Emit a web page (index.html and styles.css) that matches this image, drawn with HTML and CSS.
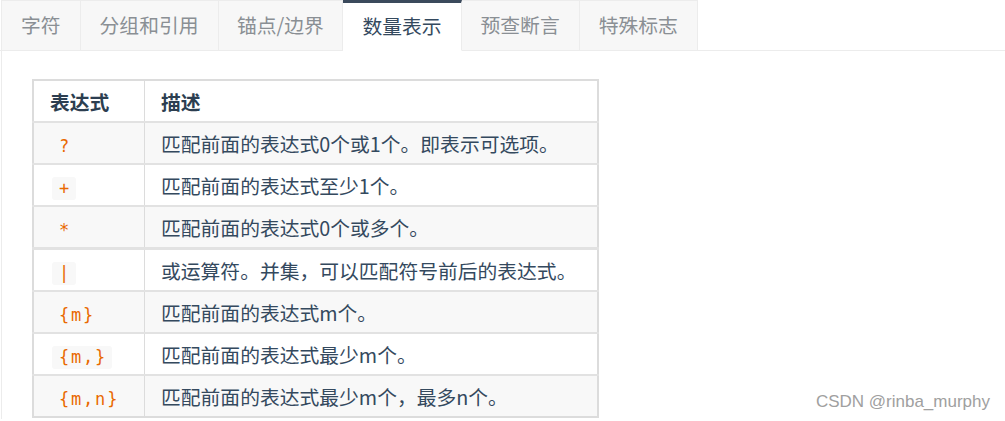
FILE: index.html
```html
<!DOCTYPE html>
<html lang="zh-CN">
<head>
  <meta charset="UTF-8">
  <meta name="viewport" content="width=device-width, initial-scale=1.0">
  <title>正则表达式 - 数量表示</title>
  <link rel="stylesheet" href="styles.css">
</head>
<body>

  <div class="tabs">
    <div class="tab">字符</div>
    <div class="tab">分组和引用</div>
    <div class="tab narrow">锚点/边界</div>
    <div class="tab active">数量表示</div>
    <div class="tab">预查断言</div>
    <div class="tab">特殊标志</div>
  </div>

  <div class="panel">
    <table>
      <thead>
        <tr><th class="col-exp">表达式</th><th>描述</th></tr>
      </thead>
      <tbody>
        <tr><td><code>?</code></td><td>匹配前面的表达式0个或1个。即表示可选项。</td></tr>
        <tr><td><code>+</code></td><td>匹配前面的表达式至少1个。</td></tr>
        <tr><td><code>*</code></td><td>匹配前面的表达式0个或多个。</td></tr>
        <tr><td><code>|</code></td><td>或运算符。并集，可以匹配符号前后的表达式。</td></tr>
        <tr><td><code>{m}</code></td><td>匹配前面的表达式m个。</td></tr>
        <tr><td><code>{m,}</code></td><td>匹配前面的表达式最少m个。</td></tr>
        <tr><td><code>{m,n}</code></td><td>匹配前面的表达式最少m个，最多n个。</td></tr>
      </tbody>
    </table>
  </div>

  <div class="watermark">CSDN @rinba_murphy</div>

</body>
</html>
```

FILE: styles.css
```css
body { margin: 0; height: 421px; overflow: hidden; position: relative; font-family: "Noto Sans CJK SC", "Noto Sans", sans-serif; color: #34495e; background: #fff; }

.tabs { display: flex; padding-left: 1px; border-bottom: 1px solid #ececec; height: 50px; }
.tab { box-sizing: border-box; height: 51px; padding: 0 19px; border: 1px solid #ececec; border-left: none; background: #f7f7f7; color: #8a8f94; font-size: 19.8px; line-height: 48px; }
.tab:first-child { border-left: 1px solid #ececec; }
.tab.narrow { padding: 0 18.5px; }
.tab.active { background: #fff; color: #34495e; border-top: 3px solid #3b4a5c; border-bottom: 1px solid #fff; line-height: 46px; }

.panel { border-left: 1px solid #ececec; margin-left: 1px; padding: 28px 0 0 30px; height: 340px; }

table { border-collapse: collapse; border: 2px solid #dcdcdc; width: 567px; font-size: 19.8px; }
th, td { height: 40px; padding: 0 16px; text-align: left; border-top: 2px solid #e2e2e2; }
th { font-weight: bold; color: #2c3e50; border-top: none; }
th + th, td + td { border-left: 1px solid #dcdcdc; }
.col-exp { width: 78px; }
tbody tr:nth-child(odd) { background: #f8f8f8; }
tbody tr:nth-child(4) td { border-top-width: 3px; }

code { display: inline-block; font-family: "DejaVu Sans Mono", monospace; font-size: 17px; line-height: 17px; letter-spacing: 1.8px; padding: 3px 5px 3px 7px; margin: 0 2px; border-radius: 3px; background: #f8f8f8; color: #e96900; }

.watermark { position: absolute; right: 15px; bottom: 9px; font-family: "Liberation Sans", Arial, sans-serif; font-size: 17px; color: #a0a0a0; }
```
